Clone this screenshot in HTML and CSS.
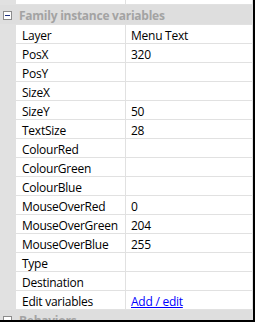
FILE: index.html
```html
<!DOCTYPE html>
<html lang="en">
<head>
<meta charset="UTF-8">
<title>Property grid</title>
<link rel="stylesheet" href="styles.css">
</head>
<body>
<div class="grid">
  <div class="row partial"><span class="name"></span><span class="value"></span></div>
  <div class="category"><span class="toggle"></span>Family instance variables</div>
  <div class="row"><span class="name">Layer</span><span class="value">Menu Text</span></div>
  <div class="row"><span class="name">PosX</span><span class="value">320</span></div>
  <div class="row"><span class="name">PosY</span><span class="value"></span></div>
  <div class="row"><span class="name">SizeX</span><span class="value"></span></div>
  <div class="row"><span class="name">SizeY</span><span class="value">50</span></div>
  <div class="row"><span class="name">TextSize</span><span class="value">28</span></div>
  <div class="row"><span class="name">ColourRed</span><span class="value"></span></div>
  <div class="row"><span class="name">ColourGreen</span><span class="value"></span></div>
  <div class="row"><span class="name">ColourBlue</span><span class="value"></span></div>
  <div class="row"><span class="name">MouseOverRed</span><span class="value">0</span></div>
  <div class="row"><span class="name">MouseOverGreen</span><span class="value">204</span></div>
  <div class="row"><span class="name">MouseOverBlue</span><span class="value">255</span></div>
  <div class="row"><span class="name">Type</span><span class="value"></span></div>
  <div class="row"><span class="name">Destination</span><span class="value"></span></div>
  <div class="row"><span class="name">Edit variables</span><span class="value"><a href="#">Add / edit</a></span></div>
  <div class="category"><span class="toggle"></span>Behaviors</div>
</div>
</body>
</html>
```
FILE: styles.css
```css
html, body {
  margin: 0;
  padding: 0;
  overflow: hidden;
  background: #fff;
}
body {
  width: 255px;
  height: 322px;
  font-family: "Open Sans", "Noto Sans", sans-serif;
  font-size: 12px;
  letter-spacing: -0.25px;
  color: #000;
}
.grid {
  width: 252px;
  height: 320px;
  overflow: hidden;
  border-right: 2px solid #000;
  border-bottom: 2px solid #000;
  background: #e1e1e1;
  padding-right: 1px;
}
.row {
  display: flex;
  height: 16px;
  padding-top: 2px;
  margin-left: 16px;
  border-bottom: 1px solid #e1e1e1;
  background: #fff;
  line-height: 18px;
}
.row.partial {
  height: 4px;
  padding-top: 0;
}
.name {
  width: 103px;
  padding-left: 6px;
  border-right: 1px solid #e1e1e1;
  margin-top: -2px;
  padding-top: 2px;
  white-space: nowrap;
  overflow: hidden;
}
.value {
  flex: 1;
  padding-left: 5px;
  white-space: nowrap;
}
.value a {
  color: #0000ff;
}
.category {
  display: flex;
  align-items: center;
  height: 20px;
  padding-top: 1px;
  box-sizing: border-box;
  background: #dedede;
  font-weight: bold;
  color: #a3a3a3;
  border-bottom: 1px solid #e1e1e1;
}
.toggle {
  width: 7px;
  height: 7px;
  margin: 0 7px 0 3px;
  border: 1px solid #8c8c8c;
  background: #fff;
  position: relative;
}
.toggle::after {
  content: "";
  position: absolute;
  left: 1px;
  top: 3px;
  width: 5px;
  height: 1px;
  background: #1c2f80;
}
```
